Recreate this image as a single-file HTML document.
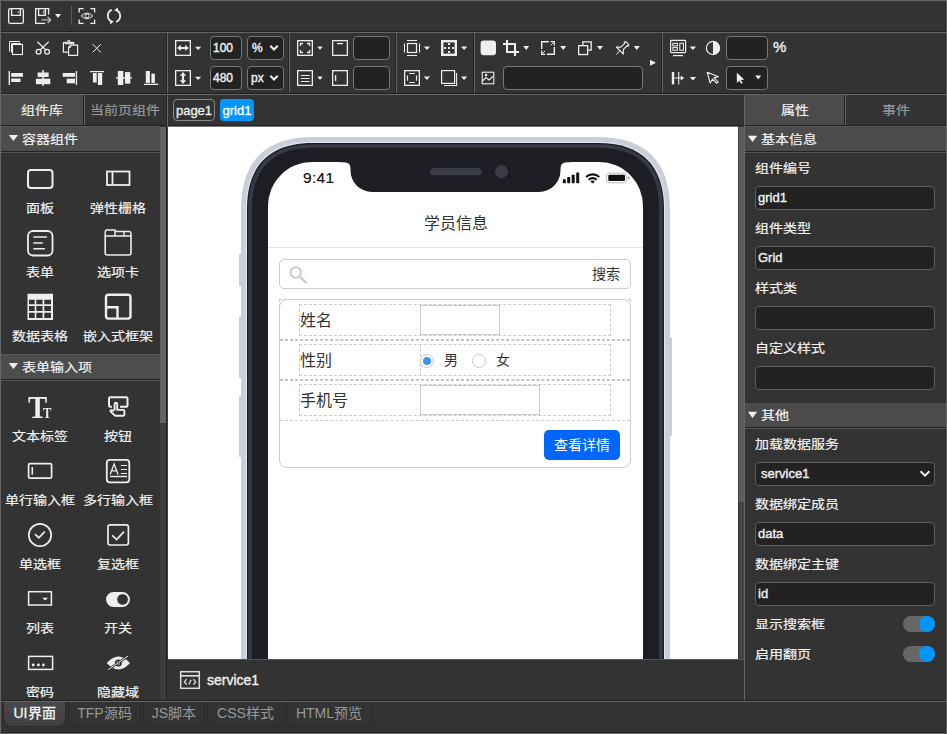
<!DOCTYPE html>
<html lang="zh-CN">
<head>
<meta charset="utf-8">
<style>
*{box-sizing:border-box}
html,body{margin:0;padding:0}
body{width:947px;height:734px;overflow:hidden;position:relative;background:#333;font-family:"Liberation Sans",sans-serif;color:#eee;font-size:14px}
.a{position:absolute}
.L{position:absolute;background:#666}
.D{position:absolute;background:#222}
svg{position:absolute;overflow:visible}
.inp{position:absolute;background:#222;border:1px solid #777;border-radius:4px}
.tri{position:absolute;width:0;height:0;border-left:3px solid transparent;border-right:3px solid transparent;border-top:4px solid #eee}
.em{-webkit-text-stroke:0.4px #eee}
.lbl{position:absolute;font-size:14px;line-height:20px;color:#f4f4f4;white-space:nowrap;font-weight:500;transform:translateY(0.8px) scaleY(0.88);-webkit-text-stroke:0.2px}
</style>
</head>
<body>
<!-- outer frame lines -->
<div class="L" style="left:0;top:0;width:947px;height:1px"></div>
<div class="L" style="left:0;top:0;width:1px;height:734px"></div>
<div class="L" style="left:946px;top:0;width:1px;height:734px"></div>
<div class="a" style="left:945px;top:1px;width:1px;height:732px;background:#2c2c2c"></div>
<!-- row1 bottom -->
<div class="D" style="left:1px;top:31px;width:945px;height:1px"></div>
<div class="L" style="left:1px;top:32px;width:945px;height:1px"></div>
<!-- row2 bottom -->
<div class="D" style="left:1px;top:93px;width:945px;height:1px"></div>
<div class="L" style="left:1px;top:94px;width:945px;height:1px"></div>


<!-- row2 separators -->
<div class="D" style="left:166px;top:33px;width:1px;height:60px"></div>
<div class="L" style="left:167px;top:33px;width:1px;height:60px"></div>
<div class="D" style="left:288px;top:33px;width:1px;height:60px"></div>
<div class="L" style="left:289px;top:33px;width:1px;height:60px"></div>
<div class="D" style="left:395px;top:33px;width:1px;height:60px"></div>
<div class="L" style="left:396px;top:33px;width:1px;height:60px"></div>
<div class="D" style="left:473px;top:33px;width:1px;height:60px"></div>
<div class="L" style="left:474px;top:33px;width:1px;height:60px"></div>
<div class="D" style="left:661px;top:33px;width:1px;height:60px"></div>
<div class="L" style="left:662px;top:33px;width:1px;height:60px"></div>
<div class="a" style="left:71px;top:6px;width:1px;height:19px;background:#5a5a5a"></div>

<!-- toolbar inputs -->
<div class="inp" style="left:210px;top:36px;width:32px;height:24px"></div>
<div class="inp" style="left:247px;top:36px;width:37px;height:24px"></div>
<div class="inp" style="left:210px;top:66px;width:32px;height:24px"></div>
<div class="inp" style="left:247px;top:66px;width:37px;height:24px"></div>
<div class="inp" style="left:353px;top:36px;width:37px;height:24px"></div>
<div class="inp" style="left:353px;top:66px;width:37px;height:24px"></div>
<div class="inp" style="left:503px;top:66px;width:140px;height:24px"></div>
<div class="inp" style="left:726px;top:36px;width:42px;height:24px"></div>
<div class="inp" style="left:726px;top:66px;width:42px;height:24px"></div>
<div class="a em" style="left:213px;top:39px;font-size:12px;line-height:18px;color:#eee">100</div>
<div class="a em" style="left:213px;top:69px;font-size:12px;line-height:18px;color:#eee">480</div>
<div class="a em" style="left:252px;top:39px;font-size:12px;line-height:18px;color:#eee">%</div>
<div class="a em" style="left:251px;top:69px;font-size:12px;line-height:18px;color:#eee">px</div>
<div class="a em" style="left:773px;top:37px;font-size:15px;line-height:20px;color:#eee">%</div>

<svg class="a" style="left:0;top:0" width="947" height="734" viewBox="0 0 947 734">
<defs><filter id="bl" x="-20%" y="-20%" width="140%" height="140%"><feGaussianBlur stdDeviation="0.5"/></filter></defs>
<g fill="none" stroke="#eee" stroke-width="1.3">
 <!-- save -->
 <rect x="8.65" y="8.65" width="14.7" height="14.7" rx="1.6"/>
 <path d="M11.6 8.6V15.4H20.4V8.6"/>
 <!-- save as -->
 <path d="M48.6 14.5V8.65H35.65V23.35H45.2"/>
 <path d="M38.6 8.6V15.4H45.4V8.6"/>
 <path d="M41.5 19.9H50.3M47.6 16.8L50.6 19.9L47.6 23" stroke="#bbb"/>
 <!-- eye scan -->
 <path d="M79.2 12.5V8.65H83.6M90.4 8.65H94.6V12.5M94.6 19.5V23.35H90.4M83.6 23.35H79.2V19.5"/>
 <path d="M81.2 15.9Q87 10.2 92.8 15.9Q87 21.6 81.2 15.9Z" stroke-width="1"/>
 <circle cx="87" cy="15.9" r="1.9" stroke-width="0.9"/>
 <!-- refresh -->
 <path d="M111.8 9.9A6.3 6.3 0 0 0 111.8 21.6" stroke-width="1.8"/>
 <path d="M116.2 10.2A6.3 6.3 0 0 1 116.2 21.9" stroke-width="1.8"/>
 <!-- copy -->
 <path d="M9.5 51.5V41.5H20" stroke-width="1"/>
 <path d="M11.5 52.5V43.5H21" stroke-width="1"/>
 <rect x="12.5" y="44.5" width="10" height="10" stroke-width="1.1"/>
 <!-- cut -->
 <circle cx="38.6" cy="51.7" r="2.4" stroke-width="1.3"/>
 <circle cx="47.1" cy="51.7" r="2.4" stroke-width="1.3"/>
 <path d="M37.4 41.7L45.6 49.8M48.7 41.7L40.3 49.8" stroke-width="1.2"/>
 <!-- paste -->
 <path d="M65.5 42.5H63.4V52.2H68.2" stroke-width="1.2"/>
 <path d="M69.8 42.5H73.7V45" stroke-width="1.2"/>
 <path d="M65.3 43.6V42.2H72.2V43.6Z" stroke-width="1.1"/>
 <path d="M67.9 42V40.6H69.6V42" stroke-width="1"/>
 <path d="M70.7 45.2H77.6V55.4H68.6V47.3Z" stroke-width="1.2"/>
 <path d="M70.7 45.2V47.3H68.6" stroke-width="1"/>
 <!-- X -->
 <path d="M92.6 44.1L100.9 52.4M100.9 44.1L92.6 52.4" stroke-width="1"/>
 <!-- width/height -->
 <rect x="175.65" y="40.65" width="14.7" height="14.7"/>
 <rect x="175.65" y="70.65" width="14.7" height="14.7"/>
 <!-- expand -->
 <rect x="297.65" y="40.65" width="14.7" height="14.7"/>
 <path d="M300.5 46V43.5H303M307 43.5H309.5V46M309.5 50V52.5H307M303 52.5H300.5V50"/>
 <rect x="297.65" y="70.65" width="14.7" height="14.7"/>
 <path d="M300.8 75.5H309.7M300.8 78.5H309.7M300.8 81.5H309.7" stroke-width="1"/>
 <rect x="332.65" y="40.65" width="14.7" height="14.7"/>
 <path d="M337 43.6H343"/>
 <rect x="332.65" y="70.65" width="14.7" height="14.7"/>
 <path d="M335.6 75V81"/>
 <!-- margin -->
 <rect x="407.5" y="43.5" width="9" height="9" stroke-width="1.2"/>
 <path d="M407 40.5H417M407 55.5H417M404.5 43.5V52.5M419.5 43.5V52.5" stroke-width="1.1"/>
 <rect x="442.2" y="41.2" width="13.6" height="13.6" stroke-width="2.4"/>
 <!-- padding -->
 <rect x="404.65" y="70.65" width="14.7" height="14.7" stroke-width="1.3"/>
 <path d="M407.5 75.5V80.8M416.5 75.5V80.8M409.3 73.5H414.8M409.3 82.5H414.8" stroke-width="1.1"/>
 <!-- shadow -->
 <rect x="441.6" y="70.6" width="13" height="12.8" stroke-width="1.2"/>
 <path d="M456.6 73V85.5H444" stroke-width="1.1"/>
 <!-- crop -->
 <path d="M503 44H515V56M507 40V52H519" stroke-width="2.1"/>
 <!-- image -->
 <rect x="482.2" y="72.2" width="11.6" height="11.6" stroke-width="1.1"/>
 <path d="M482.5 81L486 77.5L489 80L493.5 76" stroke-width="1.1"/>
 <!-- resize -->
 <path d="M541.7 48.9V41.7H548.8M554.3 47V54.3H547" stroke-width="1.4"/>
 <path d="M550.8 41.7H554.3V45.4M541.7 50.5V54.3H545.3" stroke-width="1.3"/>
 <path d="M554 42L550.6 45.4M542 54L545.2 50.8" stroke-width="0.9"/>
 <!-- copy layers -->
 <rect x="578.65" y="45.65" width="9" height="8.9" stroke-width="1.3"/>
 <path d="M582.8 45.5V41.8H591.2V50.2H587.8" stroke-width="1.3"/>
 <!-- pin -->
 <path d="M616.3 47L620.9 47.1L624.9 43.1L624.2 42.3L625.6 41.4L629 44.8L628.2 46.3L627.4 45.5L623.3 49.5L623.4 54.1Z" stroke-width="1.1" stroke-linejoin="round"/>
 <path d="M616 54.7L619.8 50.8" stroke-width="1"/>
 <!-- display -->
 <rect x="670.6" y="40.4" width="15" height="12.2" rx="0.8" stroke-width="1.2"/>
 <path d="M673 55.6H683" stroke-width="1.2"/>
 <rect x="672.8" y="43.3" width="4.6" height="2.6" stroke-width="1"/>
 <rect x="672.8" y="47.6" width="4.6" height="2.6" stroke-width="1"/>
 <rect x="679.8" y="43.3" width="3.6" height="6.9" stroke-width="1"/>
 <!-- opacity -->
 <circle cx="713" cy="48" r="6.6" stroke-width="1.2"/>
 <!-- float -->
 <path d="M678.7 72V84.4M674.5 78H681" stroke-width="1.1"/>
 <!-- cursor outline -->
 <path d="M707.2 72.2L718.3 76.7L714 77.9L718.2 82.1L716.6 83.3L712.6 79.2L710.2 83Z" stroke-width="1.1" stroke-linejoin="round"/>
</g>
<g fill="#eee">
 <path d="M17.2 12L19.3 10.4V13.6Z" fill="#aaa"/>
 <path d="M43 10.2H44.6V13.8H43Z" fill="#aaa"/>
 <path d="M114.2 10.6L117.6 7.6L118.4 11.8Z"/>
 <path d="M113.8 21.2L110.4 24.4L109.6 20.2Z"/>
 <!-- align left -->
 <rect x="8.6" y="71" width="1.4" height="14"/>
 <rect x="11.2" y="73" width="11.8" height="3.8"/>
 <rect x="11.2" y="78.5" width="9.3" height="3.5"/>
 <!-- align center -->
 <rect x="42.3" y="70" width="1.5" height="15.8"/>
 <rect x="37.6" y="72.5" width="11" height="4.5"/>
 <rect x="35.9" y="78.7" width="14.4" height="5.5"/>
 <!-- align right -->
 <rect x="75.8" y="71" width="1.3" height="14"/>
 <rect x="62.7" y="73" width="12.3" height="3.8"/>
 <rect x="66.7" y="78.7" width="8.3" height="4.6"/>
 <!-- align top -->
 <rect x="90" y="71" width="14.1" height="1.2"/>
 <rect x="92.9" y="73" width="3.8" height="9.5"/>
 <rect x="97.9" y="73" width="4.3" height="12"/>
 <!-- align middle -->
 <rect x="116" y="77.3" width="16" height="1.3"/>
 <rect x="117.8" y="71" width="5.5" height="14"/>
 <rect x="125" y="72.1" width="5.3" height="11.6"/>
 <!-- align bottom -->
 <rect x="144" y="83.7" width="14.2" height="1.3"/>
 <rect x="145.8" y="71" width="4.1" height="11.9"/>
 <rect x="151.4" y="73.6" width="3.5" height="9.3"/>
 <!-- triangles -->
 <path d="M55 14H61L58 18Z"/>
 <path d="M195 46.8H201.2L198.1 49.9Z"/>
 <path d="M195 76.8H201.2L198.1 79.9Z"/>
 <path d="M317.3 46.4H322.7L320 50Z"/>
 <path d="M317.3 76.4H322.7L320 80Z"/>
 <path d="M423.8 46.4H430L426.9 50Z"/>
 <path d="M423.8 76.4H430L426.9 80Z"/>
 <path d="M461 46.4H467.2L464.1 50Z"/>
 <path d="M461 76.4H467.2L464.1 80Z"/>
 <path d="M523.3 46H529.2L526.25 50Z"/>
 <path d="M560.2 46H566.2L563.2 50Z"/>
 <path d="M597 46H603L600 50Z"/>
 <path d="M633.8 46H639.8L636.8 50Z"/>
 <path d="M689.7 46.6H696.1L692.9 50Z"/>
 <path d="M689.7 77H696.1L692.9 80.4Z"/>
 <path d="M755.2 75.6H761.2L758.2 79.6Z"/>
 <path d="M650 59.8L656 62.7L650 65.7Z"/>
 <!-- width arrows -->
 <path d="M177.1 47.9L180.8 44.7V46.9H185.2V44.7L188.9 47.9L185.2 51.1V49H180.8V51.1Z"/>
 <path d="M183 72.1L186.2 75.8H184.1V80.2H186.2L183 83.9L179.8 80.2H181.9V75.8H179.8Z"/>
 <!-- dotted border -->
 <rect x="448" y="43" width="2" height="2"/><rect x="448" y="47" width="2" height="2"/><rect x="448" y="51" width="2" height="2"/><rect x="444" y="47" width="2" height="2"/><rect x="452" y="47" width="2" height="2"/>
 <rect x="480.6" y="40.6" width="15.4" height="14.7" rx="3.2" filter="url(#bl)"/>
 <circle cx="486" cy="75" r="1.3"/>
 <path d="M713 41.4A6.6 6.6 0 0 1 713 54.6Z"/>
 <rect x="671.8" y="72" width="2.4" height="12.4"/><path d="M684.2 78L680.8 75.6V80.4Z"/>
 <path d="M736.8 72.8L744.2 79.6L740.6 79.9L742.8 83L741.2 83.8L739.2 80.7L736.9 83Z"/>
</g>
<g fill="none" stroke="#eee" stroke-width="1.6">
 <path d="M270.3 45.8L274 49.5L277.7 45.8" stroke-width="2"/>
 <path d="M270.3 75.8L274 79.5L277.7 75.8" stroke-width="2"/>
</g>
</svg>



<!-- tabs row -->
<div class="a" style="left:1px;top:95px;width:82px;height:30px;background:#4b4b4b"></div>
<div class="D" style="left:83px;top:95px;width:1px;height:30px"></div>
<div class="L" style="left:84px;top:95px;width:1px;height:30px"></div>
<div class="lbl" style="left:21px;top:100px;color:#eee">组件库</div>
<div class="lbl" style="left:90px;top:100px;color:#999">当前页组件</div>
<div class="D" style="left:166px;top:95px;width:1px;height:605px"></div>
<div class="L" style="left:167px;top:95px;width:1px;height:32px"></div>
<div class="a" style="left:167px;top:127px;width:1px;height:532px;background:#404040"></div>
<div class="D" style="left:1px;top:125px;width:165px;height:1px"></div>
<!-- left panel scrollbar -->
<div class="a" style="left:160px;top:127px;width:6px;height:573px;background:#3c3c3c"></div>
<div class="a" style="left:160px;top:127px;width:6px;height:296px;background:#646464"></div>
<!-- section header 1 -->
<div class="a" style="left:1px;top:126px;width:159px;height:1px;background:#5a5a5a"></div>
<div class="a" style="left:1px;top:127px;width:159px;height:24px;background:#4d4d4d"></div>
<div class="D" style="left:1px;top:151px;width:159px;height:1px"></div>
<div class="a" style="left:1px;top:152px;width:159px;height:1px;background:#555"></div>
<div class="lbl" style="left:22px;top:129px">容器组件</div>
<!-- section header 2 -->
<div class="a" style="left:1px;top:354px;width:159px;height:1px;background:#5a5a5a"></div>
<div class="a" style="left:1px;top:355px;width:159px;height:24px;background:#4d4d4d"></div>
<div class="D" style="left:1px;top:379px;width:159px;height:1px"></div>
<div class="a" style="left:1px;top:380px;width:159px;height:1px;background:#555"></div>
<div class="lbl" style="left:22px;top:357px">表单输入项</div>
<!-- item labels -->
<div class="lbl" style="left:0;width:80px;text-align:center;top:198px">面板</div>
<div class="lbl" style="left:78px;width:80px;text-align:center;top:198px">弹性栅格</div>
<div class="lbl" style="left:0;width:80px;text-align:center;top:262px">表单</div>
<div class="lbl" style="left:78px;width:80px;text-align:center;top:262px">选项卡</div>
<div class="lbl" style="left:0;width:80px;text-align:center;top:326px">数据表格</div>
<div class="lbl" style="left:78px;width:80px;text-align:center;top:326px">嵌入式框架</div>
<div class="lbl" style="left:0;width:80px;text-align:center;top:426px">文本标签</div>
<div class="lbl" style="left:78px;width:80px;text-align:center;top:426px">按钮</div>
<div class="lbl" style="left:0;width:80px;text-align:center;top:490px">单行输入框</div>
<div class="lbl" style="left:78px;width:80px;text-align:center;top:490px">多行输入框</div>
<div class="lbl" style="left:0;width:80px;text-align:center;top:554px">单选框</div>
<div class="lbl" style="left:78px;width:80px;text-align:center;top:554px">复选框</div>
<div class="lbl" style="left:0;width:80px;text-align:center;top:618px">列表</div>
<div class="lbl" style="left:78px;width:80px;text-align:center;top:618px">开关</div>
<div class="lbl" style="left:0;width:80px;text-align:center;top:682px">密码</div>
<div class="lbl" style="left:78px;width:80px;text-align:center;top:682px">隐藏域</div>
<svg class="a" style="left:0;top:0" width="947" height="734" viewBox="0 0 947 734">
<g fill="#eee">
 <path d="M8.8 134.9H18.1L13.45 141Z"/>
 <path d="M8.8 362.9H18.1L13.45 369Z"/>
</g>
<g fill="none" stroke="#eee" stroke-width="2">
 <rect x="28" y="170" width="24.5" height="18" rx="3"/>
 <rect x="107" y="171.5" width="22.5" height="13.5" stroke-width="1.8"/>
 <path d="M112.5 171.5V185" stroke-width="1.8"/>
 <rect x="28" y="231" width="24.5" height="24.5" rx="5" stroke-width="1.8"/>
 <path d="M33.3 237H46.9M33.3 243H42.8M33.3 248.8H45" stroke-width="1.4"/>
 <path d="M105.2 236V253A2 2 0 0 0 107.2 255H129A2 2 0 0 0 131 253V236Z" stroke-width="1.6"/>
 <path d="M105.2 236V232A2 2 0 0 1 107.2 230H115V236M115 231.5H124V236M124 231.5H129A2 2 0 0 1 131 233.5V236" stroke-width="1.4"/>
 <rect x="106" y="294.8" width="24.5" height="23.8" rx="2.5" stroke-width="2.4"/>
 <path d="M106 307.2H117.5V318.6" stroke-width="2.4"/>
 <rect x="28.6" y="463.6" width="23" height="14.6" rx="1.5" stroke-width="1.7"/>
 <path d="M32.3 467V474.7" stroke-width="1.6"/>
 <rect x="106.8" y="459.8" width="22.5" height="22.5" rx="3" stroke-width="1.8"/>
 <path d="M110 476.5H127" stroke-width="1.4"/>
 <path d="M120.8 465.5H127M120.8 469.5H127M120.8 473.5H127" stroke-width="1.2"/>
 <path d="M110.2 474.4L114.1 464L118.1 474.4M111.6 470.8H116.7" stroke-width="1.3"/>
 <circle cx="40" cy="535" r="11.2" stroke-width="1.7"/>
 <path d="M35 534.2L38.8 537.8L44.8 531.6" stroke-width="1.7"/>
 <rect x="108" y="524.8" width="20.4" height="20.2" rx="2.2" stroke-width="1.7"/>
 <path d="M112.3 535.3L116.6 539.5L124 531.7" stroke-width="1.7"/>
 <rect x="28.6" y="591.7" width="22.8" height="13.3" stroke-width="1.5"/>
 <rect x="28.6" y="656.4" width="24" height="13" stroke-width="1.5"/>
 <path d="M112 406.7H110.3A1.3 1.3 0 0 1 109 405.4V398.6A1.3 1.3 0 0 1 110.3 397.3H126.2A1.3 1.3 0 0 1 127.5 398.6V405.4A1.3 1.3 0 0 1 126.2 406.7H120" stroke-width="2"/>
 <path d="M114.6 410.6V404A1.3 1.3 0 0 1 117.2 404V409.9H123.2A1.2 1.2 0 0 1 124.4 411.1V414.6A1.2 1.2 0 0 1 123.2 415.8H115.2L110.6 411.6A0.9 0.9 0 0 1 111.2 410.2L114 410.8" stroke-width="1.9" stroke-linejoin="round"/>
</g>
<g fill="#eee">
  <path d="M27.5 293.7H53V320H27.5ZM29 299.8V304.3H34.7V299.8ZM29 305.9V311.1H34.7V305.9ZM29 312.7V318.1H34.7V312.7ZM36.3 299.8V304.3H42.6V299.8ZM36.3 305.9V311.1H42.6V305.9ZM36.3 312.7V318.1H42.6V312.7ZM44.3 299.8V304.3H51V299.8ZM44.3 305.9V311.1H51V305.9ZM44.3 312.7V318.1H51V312.7Z" fill-rule="evenodd"/>
 <path d="M42.2 597.7H48.1L45.15 600.6Z"/>
 <circle cx="33.2" cy="665" r="1.4"/><circle cx="38.4" cy="665" r="1.4"/><circle cx="43.4" cy="665" r="1.4"/>
 <path d="M113.5 592H122.5A7.45 7.45 0 0 1 122.5 606.9H113.5A7.45 7.45 0 0 1 113.5 592Z"/>
 <circle cx="122.6" cy="599.45" r="5.8" fill="#333" stroke="#eee" stroke-width="1"/>
 <path d="M106.8 663Q118.4 650 130 663Q118.4 676 106.8 663Z"/>
 <circle cx="118.4" cy="663" r="3.5" fill="#333"/>
 <circle cx="118.4" cy="663" r="1.8"/>
 <path d="M108.5 669.5L127.5 656.5" stroke="#333" stroke-width="2.4"/>
 <path d="M108.3 669.6L128 656" stroke="#eee" stroke-width="1"/>
</g>
</svg>
<div class="a" style="left:28px;top:391px;font:bold 32px/32px 'Liberation Serif',serif;color:#eee;transform:scaleX(0.9);transform-origin:left">T</div>
<div class="a" style="left:43px;top:407px;font:bold 14px/14px 'Liberation Serif',serif;color:#eee;transform:scaleX(0.9);transform-origin:left">T</div>



<!-- tags -->
<div class="a" style="left:173px;top:99px;width:42px;height:22px;border:1px solid #888;border-radius:4px;font-size:13px;line-height:22px;text-align:center;color:#eee;-webkit-text-stroke:0.35px #eee">page1</div>
<div class="a" style="left:220px;top:99px;width:34px;height:22px;background:#0096ff;border-radius:4px;font-size:13px;line-height:23px;text-align:center;color:#fff;-webkit-text-stroke:0.35px #fff">grid1</div>
<div class="D" style="left:168px;top:125px;width:576px;height:1px"></div>
<div class="a" style="left:168px;top:126px;width:570px;height:1px;background:#777"></div>
<!-- canvas -->
<div class="a" style="left:168px;top:127px;width:570px;height:532px;background:#fff;overflow:hidden">
 <!-- phone -->
 <svg class="a" style="left:0;top:0" width="570" height="532" viewBox="168 127 570 532">
  <rect x="239" y="253.5" width="4" height="33" rx="1.5" fill="#c9ced9"/>
  <rect x="239" y="316.4" width="4" height="61.6" rx="1.5" fill="#c9ced9"/>
  <rect x="239" y="396" width="4" height="61" rx="1.5" fill="#c9ced9"/>
  <rect x="668" y="337" width="4" height="99" rx="1.5" fill="#c9ced9"/>
  <path d="M241.00 209.00C241.00 161.48 265.48 137.00 313.00 137.00H598.00C645.52 137.00 670.00 161.48 670.00 209.00V900H241.00Z" fill="#c9ced9"/><path d="M245.80 209.00C245.80 164.65 268.65 141.80 313.00 141.80H598.00C642.35 141.80 665.20 164.65 665.20 209.00V900H245.80Z" fill="#e1e5ed"/><path d="M247.00 209.00C247.00 165.44 269.44 143.00 313.00 143.00H598.00C641.56 143.00 664.00 165.44 664.00 209.00V900H247.00Z" fill="#1d1e23"/><path d="M248.30 209.00C248.30 166.30 270.30 144.30 313.00 144.30H598.00C640.70 144.30 662.70 166.30 662.70 209.00V900H248.30Z" fill="#363946"/><path d="M251.80 209.00C251.80 168.61 272.61 147.80 313.00 147.80H598.00C638.39 147.80 659.20 168.61 659.20 209.00V900H251.80Z" fill="#1d1e23"/>
 </svg>
 <div class="a" style="left:100px;top:35px;width:375px;height:680px;background:#fff;border-radius:44px;overflow:hidden">
 </div>
</div>
<!-- phone screen contents in page coords -->
<svg class="a" style="left:0;top:0" width="947" height="734" viewBox="0 0 947 734">
 <path d="M340 160V162.3H344Q350.5 162.3 350.5 168.5V170.5A21.5 21.5 0 0 0 372 192H539A21.5 21.5 0 0 0 560.5 170.5V168.5Q560.5 162.3 567 162.3H571V160Z" fill="#1d1e23"/>
 <rect x="430" y="168" width="51.6" height="7.3" rx="3.6" fill="#3a3c48"/>
 <circle cx="501.6" cy="171.5" r="6.5" fill="#3a3c48"/>
 <g fill="#111">
  <rect x="562.8" y="179.2" width="3" height="4" rx="0.6"/>
  <rect x="567.2" y="177" width="3" height="6.2" rx="0.6"/>
  <rect x="571.7" y="174.7" width="3" height="8.5" rx="0.6"/>
  <rect x="576.2" y="172.5" width="3" height="10.7" rx="0.6"/>
  <path d="M585.3 176.2A10.5 10.5 0 0 1 600 176.2L598.5 177.8A8.3 8.3 0 0 0 586.8 177.8Z"/>
  <path d="M587.9 178.9A6.8 6.8 0 0 1 597.4 178.9L595.9 180.5A4.6 4.6 0 0 0 589.4 180.5Z"/>
  <path d="M590.4 181.4A3 3 0 0 1 594.9 181.4L592.65 183.6Z"/>
  <rect x="608.3" y="174.8" width="16.7" height="6.3" rx="1"/>
  <path d="M628.6 176.6A1.6 1.6 0 0 1 628.6 179.4Z"/>
 </g>
 <rect x="606.6" y="173.1" width="20" height="9.7" rx="2.6" fill="none" stroke="#b5b5b5" stroke-width="0.9"/>
 <g fill="none" stroke="#ccc" stroke-width="2">
  <circle cx="295.8" cy="272.5" r="5.2"/>
  <path d="M299.6 276.4L306 282.6" stroke-width="2.4" stroke-linecap="round"/>
 </g>
</svg>
<div class="a" style="left:303px;top:168px;font-size:15.5px;line-height:20px;color:#111;letter-spacing:0.3px;-webkit-text-stroke:0.2px #111">9:41</div>
<div class="a" style="left:375px;top:211.5px;width:161px;text-align:center;font-size:16px;line-height:24px;color:#333">学员信息</div>
<div class="a" style="left:268px;top:247px;width:375px;height:1px;background:#e3e3e3"></div>
<div class="a" style="left:279px;top:259px;width:352px;height:30px;border:1px solid #ccc;border-radius:5px"></div>
<div class="a" style="left:592px;top:264px;font-size:14px;line-height:20px;color:#333">搜索</div>
<!-- grid container -->
<div class="a" style="left:279px;top:299px;width:352px;height:41px;border:1px dashed #ccc;border-bottom:0"></div>
<div class="a" style="left:279px;top:299px;width:352px;height:169px;border:1px solid #ccc;border-radius:8px;background:transparent"></div>
<div class="a" style="left:280px;top:339px;width:350px;height:0;border-top:1px dashed #bbb"></div>
<div class="a" style="left:280px;top:340px;width:350px;height:0;border-top:1px dashed #ccc"></div>
<div class="a" style="left:280px;top:379px;width:350px;height:0;border-top:1px dashed #bbb"></div>
<div class="a" style="left:280px;top:380px;width:350px;height:0;border-top:1px dashed #ccc"></div>
<div class="a" style="left:280px;top:420px;width:350px;height:0;border-top:1px dashed #ccc"></div>
<div class="a" style="left:299px;top:304px;width:312px;height:32px;border:1px dashed #ccc"></div>
<div class="a" style="left:299px;top:344px;width:312px;height:32px;border:1px dashed #ccc"></div>
<div class="a" style="left:299px;top:384px;width:312px;height:32px;border:1px dashed #ccc"></div>
<div class="a" style="left:420px;top:304px;width:0;height:32px;border-left:1px dashed #ccc"></div>
<div class="a" style="left:420px;top:344px;width:0;height:32px;border-left:1px dashed #ccc"></div>
<div class="a" style="left:420px;top:384px;width:0;height:32px;border-left:1px dashed #ccc"></div>
<div class="a" style="left:420px;top:305px;width:80px;height:30px;border:1px solid #ccc"></div>
<div class="a" style="left:420px;top:385px;width:120px;height:30px;border:1px solid #ccc"></div>
<div class="a" style="left:300px;top:310px;font-size:16px;line-height:22px;color:#333">姓名</div>
<div class="a" style="left:300px;top:350px;font-size:16px;line-height:22px;color:#333">性别</div>
<div class="a" style="left:300px;top:390px;font-size:16px;line-height:22px;color:#333">手机号</div>
<div class="a" style="left:420px;top:354px;width:14px;height:14px;border-radius:50%;border:1px solid #ccc;background:#fff"></div>
<div class="a" style="left:423px;top:357px;width:8px;height:8px;border-radius:50%;background:#3d94f4"></div>
<div class="a" style="left:444px;top:350px;font-size:14px;line-height:20px;color:#333">男</div>
<div class="a" style="left:472px;top:354px;width:14px;height:14px;border-radius:50%;border:1px solid #ccc;background:#fff"></div>
<div class="a" style="left:496px;top:350px;font-size:14px;line-height:20px;color:#333">女</div>
<div class="a" style="left:544px;top:430px;width:76px;height:30px;background:#0066ff;border-radius:5px;color:#fff;font-size:14px;line-height:30px;text-align:center;font-weight:500">查看详情</div>



<!-- canvas right scrollbar -->
<div class="a" style="left:738px;top:127px;width:6px;height:532px;background:#444"></div>
<div class="a" style="left:738px;top:127px;width:6px;height:375px;background:#5c5c5c"></div>
<div class="a" style="left:738px;top:127px;width:1px;height:532px;background:rgba(0,0,0,0.25)"></div>
<div class="L" style="left:744px;top:95px;width:1px;height:606px"></div>
<!-- right tabs -->
<div class="a" style="left:745px;top:95px;width:99px;height:30px;background:#4b4b4b"></div>
<div class="D" style="left:844px;top:95px;width:1px;height:30px"></div>
<div class="L" style="left:845px;top:95px;width:1px;height:30px"></div>
<div class="lbl" style="left:745px;top:100px;width:99px;text-align:center">属性</div>
<div class="lbl" style="left:846px;top:100px;width:100px;text-align:center;color:#999">事件</div>
<div class="D" style="left:745px;top:125px;width:201px;height:1px"></div>
<!-- section headers -->
<div class="a" style="left:745px;top:126px;width:201px;height:1px;background:#5a5a5a"></div>
<div class="a" style="left:745px;top:127px;width:201px;height:24px;background:#4b4b4b"></div>
<div class="D" style="left:745px;top:151px;width:201px;height:1px"></div>
<div class="a" style="left:745px;top:152px;width:201px;height:1px;background:#555"></div>
<div class="lbl" style="left:761px;top:129px">基本信息</div>
<div class="a" style="left:745px;top:403px;width:201px;height:24px;background:#4b4b4b"></div>
<div class="D" style="left:745px;top:427px;width:201px;height:1px"></div>
<div class="a" style="left:745px;top:428px;width:201px;height:1px;background:#555"></div>
<div class="lbl" style="left:761px;top:405px">其他</div>
<svg class="a" style="left:0;top:0" width="947" height="734" viewBox="0 0 947 734">
 <g fill="#eee">
 <path d="M747.9 135.8H757.2L752.55 142Z"/>
 <path d="M747.9 411.8H757.2L752.55 418Z"/>
 </g>
</svg>
<div class="lbl" style="left:755px;top:158px">组件编号</div>
<div class="inp" style="left:755px;top:186px;width:180px;height:24px;border-color:#5e5e5e"></div>
<div class="a em" style="left:758px;top:188px;font-size:13px;line-height:20px">grid1</div>
<div class="lbl" style="left:755px;top:218px">组件类型</div>
<div class="inp" style="left:755px;top:246px;width:180px;height:24px;border-color:#5e5e5e"></div>
<div class="a em" style="left:758px;top:248px;font-size:13px;line-height:20px">Grid</div>
<div class="lbl" style="left:755px;top:278px">样式类</div>
<div class="inp" style="left:755px;top:306px;width:180px;height:24px;border-color:#5e5e5e"></div>
<div class="lbl" style="left:755px;top:338px">自定义样式</div>
<div class="inp" style="left:755px;top:366px;width:180px;height:24px;border-color:#5e5e5e"></div>
<div class="lbl" style="left:755px;top:434px">加载数据服务</div>
<div class="inp" style="left:755px;top:462px;width:180px;height:24px;border-color:#5e5e5e"></div>
<div class="a em" style="left:761px;top:464px;font-size:13px;line-height:20px">service1</div>
<svg class="a" style="left:0;top:0" width="947" height="734" viewBox="0 0 947 734"><path d="M920.6 471.2L925 475.6L929.4 471.2" fill="none" stroke="#eee" stroke-width="2"/></svg>
<div class="lbl" style="left:755px;top:494px">数据绑定成员</div>
<div class="inp" style="left:755px;top:522px;width:180px;height:24px;border-color:#5e5e5e"></div>
<div class="a em" style="left:758px;top:524px;font-size:13px;line-height:20px">data</div>
<div class="lbl" style="left:755px;top:554px">数据绑定主键</div>
<div class="inp" style="left:755px;top:582px;width:180px;height:24px;border-color:#5e5e5e"></div>
<div class="a em" style="left:758px;top:584px;font-size:13px;line-height:20px">id</div>
<div class="lbl" style="left:755px;top:614px">显示搜索框</div>
<div class="lbl" style="left:755px;top:644px">启用翻页</div>
<div class="a" style="left:903px;top:616px;width:32px;height:16px;border-radius:8px;background:#666"></div>
<div class="a" style="left:919px;top:616px;width:16px;height:16px;border-radius:8px;background:#0096ff"></div>
<div class="a" style="left:903px;top:646px;width:32px;height:16px;border-radius:8px;background:#666"></div>
<div class="a" style="left:919px;top:646px;width:16px;height:16px;border-radius:8px;background:#0096ff"></div>



<!-- service bar -->
<div class="a" style="left:168px;top:659px;width:576px;height:1px;background:#555"></div>
<div class="D" style="left:1px;top:700px;width:945px;height:1px"></div>
<div class="L" style="left:1px;top:701px;width:945px;height:1px"></div>
<svg class="a" style="left:0;top:0" width="947" height="734" viewBox="0 0 947 734">
 <g fill="none" stroke="#ddd" stroke-width="1.5">
 <rect x="180.7" y="671.7" width="18.6" height="16.6"/>
 <path d="M180.7 675.8H199.3" stroke-width="1.7"/>
 <path d="M186.6 679.3L184.3 681.9L186.6 684.5M193.4 679.3L195.7 681.9L193.4 684.5M191.1 679.8L188.9 684.4" stroke-width="1.3"/>
 </g>
</svg>
<div class="a em" style="left:207px;top:669px;font-size:14px;line-height:22px;color:#eee">service1</div>
<!-- bottom tabs -->
<div class="a" style="left:3px;top:702px;width:63px;height:25px;background:linear-gradient(#4a4a4a,#3f3f3f);border-radius:0 0 8px 8px;border:1px solid #2a2a2a;border-top:0"></div>
<div class="a" style="left:68px;top:702px;width:73px;height:25px;border-radius:0 0 8px 8px;border:1px solid #2a2a2a;border-top:0"></div>
<div class="a" style="left:143px;top:702px;width:62px;height:25px;border-radius:0 0 8px 8px;border:1px solid #2a2a2a;border-top:0"></div>
<div class="a" style="left:207px;top:702px;width:77px;height:25px;border-radius:0 0 8px 8px;border:1px solid #2a2a2a;border-top:0"></div>
<div class="a" style="left:286px;top:702px;width:87px;height:25px;border-radius:0 0 8px 8px;border:1px solid #2a2a2a;border-top:0"></div>
<div class="a" style="left:3px;top:703px;width:63px;text-align:center;font-size:14px;line-height:20px;color:#f4f4f4;font-weight:500;-webkit-text-stroke:0.3px">UI界面</div>
<div class="a" style="left:68px;top:703px;width:73px;text-align:center;font-size:14px;line-height:20px;color:#999">TFP源码</div>
<div class="a" style="left:143px;top:703px;width:62px;text-align:center;font-size:14px;line-height:20px;color:#999">JS脚本</div>
<div class="a" style="left:207px;top:703px;width:77px;text-align:center;font-size:14px;line-height:20px;color:#999">CSS样式</div>
<div class="a" style="left:286px;top:703px;width:86px;text-align:center;font-size:14px;line-height:20px;color:#999">HTML预览</div>
<div class="D" style="left:1px;top:732px;width:945px;height:1px"></div>
<div class="L" style="left:0;top:733px;width:947px;height:1px"></div>

</body>
</html>
